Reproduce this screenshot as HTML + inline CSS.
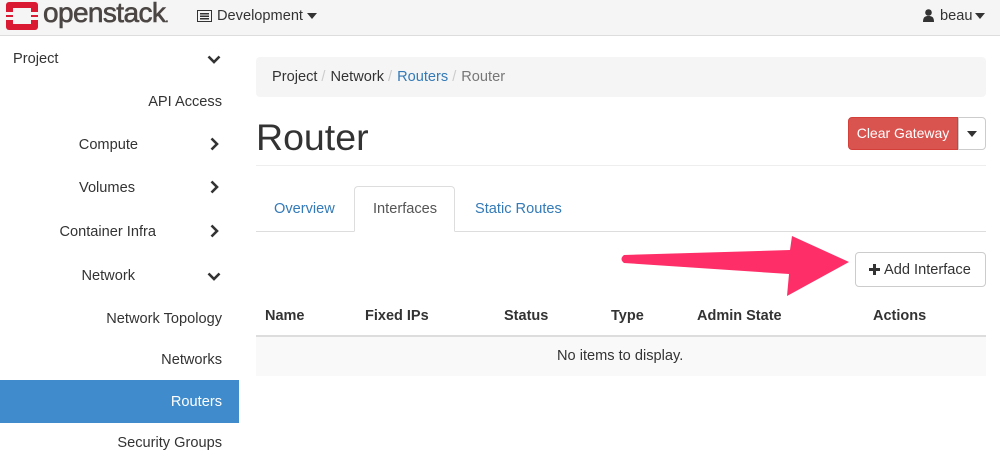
<!DOCTYPE html>
<html><head><style>
*{box-sizing:border-box;margin:0;padding:0}
body{width:1000px;height:454px;overflow:hidden;background:#fff;font-family:"Liberation Sans",Helvetica,Arial,sans-serif;color:#333;position:relative}
.top{position:absolute;left:0;top:0;width:1000px;height:36px;background:#f5f5f5;border-bottom:1px solid #ddd}
.abs{position:absolute;white-space:nowrap}
.side div{position:absolute;font-size:14.6px;color:#333;white-space:nowrap}
.chev{position:absolute}
.th{position:absolute;top:308px;font-size:14.5px;font-weight:bold;color:#333}
.sl{color:#ccc;padding:0 5px 0 4px}
</style></head><body>
<div class="top"></div>
<svg class="abs" style="left:6px;top:2px" width="32" height="28" viewBox="0 0 32 28"><rect x="0" y="0" width="32" height="28" rx="3" fill="#da1a32"/><rect x="7" y="6" width="18" height="16" fill="#f5f5f5"/><rect x="0" y="10" width="7" height="3" fill="#f5f5f5"/><rect x="25" y="10" width="7" height="3" fill="#f5f5f5"/><rect x="0" y="15" width="7" height="3" fill="#f5f5f5"/><rect x="25" y="15" width="7" height="3" fill="#f5f5f5"/></svg>
<div class="abs" style="left:43px;top:-3px;font-size:28px;color:#4b4644;letter-spacing:-0.6px;-webkit-text-stroke:0.6px #4b4644">openstack<span style="font-size:12px">.</span></div>
<svg class="abs" style="left:197px;top:10px" width="15" height="12"><rect x="0.5" y="0.5" width="14" height="11" fill="none" stroke="#333"/><rect x="3" y="3" width="9" height="1.5" fill="#333"/><rect x="3" y="5.5" width="9" height="1.5" fill="#333"/><rect x="3" y="8" width="9" height="1.5" fill="#333"/></svg>
<div class="abs" style="left:217px;top:8px;font-size:14.6px">Development</div>
<svg class="abs" style="left:307px;top:13px" width="10" height="6"><path d="M0 0h10L5 6z" fill="#333"/></svg>
<svg class="abs" style="left:923px;top:9px" width="11" height="13"><circle cx="5.5" cy="3.5" r="3.3" fill="#333"/><path d="M0 13c0-5 2-6 5.5-6s5.5 1 5.5 6z" fill="#333"/></svg>
<div class="abs" style="left:940px;top:8px;font-size:14.6px">beau</div>
<svg class="abs" style="left:975px;top:13px" width="10" height="6"><path d="M0 0h10L5 6z" fill="#333"/></svg>

<div class="side">
<div style="left:13px;top:51px">Project</div>
<div style="right:778px;top:94px">API Access</div>
<div style="right:862px;top:137px">Compute</div>
<div style="right:865px;top:180px">Volumes</div>
<div style="right:844px;top:224px">Container Infra</div>
<div style="right:865px;top:268px">Network</div>
<div style="right:778px;top:311px">Network Topology</div>
<div style="right:778px;top:352px">Networks</div>
<div class="abs" style="left:0;top:380px;width:239px;height:43px;background:#3f8bcc"></div>
<div style="right:778px;top:394px;color:#fff">Routers</div>
<div style="right:778px;top:435px">Security Groups</div>
</div>
<svg class="chev" style="left:207px;top:55px" width="14" height="9"><path d="M1.5 1.5l5.5 5.5 5.5-5.5" fill="none" stroke="#333" stroke-width="2.6"/></svg>
<svg class="chev" style="left:210px;top:137px" width="9" height="14"><path d="M1.5 1.5l5.5 5.5-5.5 5.5" fill="none" stroke="#333" stroke-width="2.6"/></svg>
<svg class="chev" style="left:210px;top:180px" width="9" height="14"><path d="M1.5 1.5l5.5 5.5-5.5 5.5" fill="none" stroke="#333" stroke-width="2.6"/></svg>
<svg class="chev" style="left:210px;top:224px" width="9" height="14"><path d="M1.5 1.5l5.5 5.5-5.5 5.5" fill="none" stroke="#333" stroke-width="2.6"/></svg>
<svg class="chev" style="left:207px;top:272px" width="14" height="9"><path d="M1.5 1.5l5.5 5.5 5.5-5.5" fill="none" stroke="#333" stroke-width="2.6"/></svg>

<div class="abs" style="left:256px;top:57px;width:730px;height:40px;background:#f5f5f5;border-radius:4px"></div>
<div class="abs" style="left:272px;top:69px;font-size:14.6px">Project<span class="sl">/</span>Network<span class="sl">/</span><span style="color:#337ab7">Routers</span><span class="sl">/</span><span style="color:#777">Router</span></div>
<div class="abs" style="left:256px;top:116px;font-size:37.5px;color:#333">Router</div>
<div class="abs" style="left:256px;top:165px;width:730px;height:1px;background:#eee"></div>
<div class="abs" style="left:848px;top:117px;width:110px;height:33px;background:#d9534f;border:1px solid #d43f3a;border-radius:4px 0 0 4px;color:#fff;font-size:14px;text-align:center;line-height:31px">Clear Gateway</div>
<div class="abs" style="left:958px;top:117px;width:28px;height:33px;border:1px solid #ccc;border-radius:0 4px 4px 0;background:#fff"></div>
<svg class="abs" style="left:967px;top:131px" width="10" height="6"><path d="M0 0h10L5 6z" fill="#333"/></svg>

<div class="abs" style="left:256px;top:231px;width:730px;height:1px;background:#ddd"></div>
<div class="abs" style="left:274px;top:201px;font-size:14.6px;color:#337ab7">Overview</div>
<div class="abs" style="left:354px;top:186px;width:101px;height:46px;background:#fff;border:1px solid #ddd;border-bottom-color:#fff;border-radius:4px 4px 0 0"></div>
<div class="abs" style="left:373px;top:201px;font-size:14.6px;color:#555">Interfaces</div>
<div class="abs" style="left:475px;top:201px;font-size:14.6px;color:#337ab7">Static Routes</div>

<div class="abs" style="left:855px;top:252px;width:131px;height:35px;border:1px solid #ccc;border-radius:4px;background:#fff"></div>
<svg class="abs" style="left:869px;top:264px" width="11" height="11"><path d="M4 0h3v4h4v3H7v4H4V7H0V4h4z" fill="#333"/></svg>
<div class="abs" style="left:884px;top:262px;font-size:14.6px;color:#333">Add Interface</div>

<div class="th" style="left:265px">Name</div>
<div class="th" style="left:365px">Fixed IPs</div>
<div class="th" style="left:504px">Status</div>
<div class="th" style="left:611px">Type</div>
<div class="th" style="left:697px">Admin State</div>
<div class="th" style="left:873px">Actions</div>
<div class="abs" style="left:256px;top:335px;width:730px;height:2px;background:#ddd"></div>
<div class="abs" style="left:256px;top:337px;width:730px;height:39px;background:#f9f9f9"></div>
<div class="abs" style="left:557px;top:348px;font-size:14.6px">No items to display.</div>

<svg class="abs" style="left:0;top:0" width="1000" height="454"><path d="M624 255 L790 250 L792 236 L849 262 L787 296 L789 274 L624 263 Q619 259 624 255Z" fill="#fe2f68"/></svg>
</body></html>
